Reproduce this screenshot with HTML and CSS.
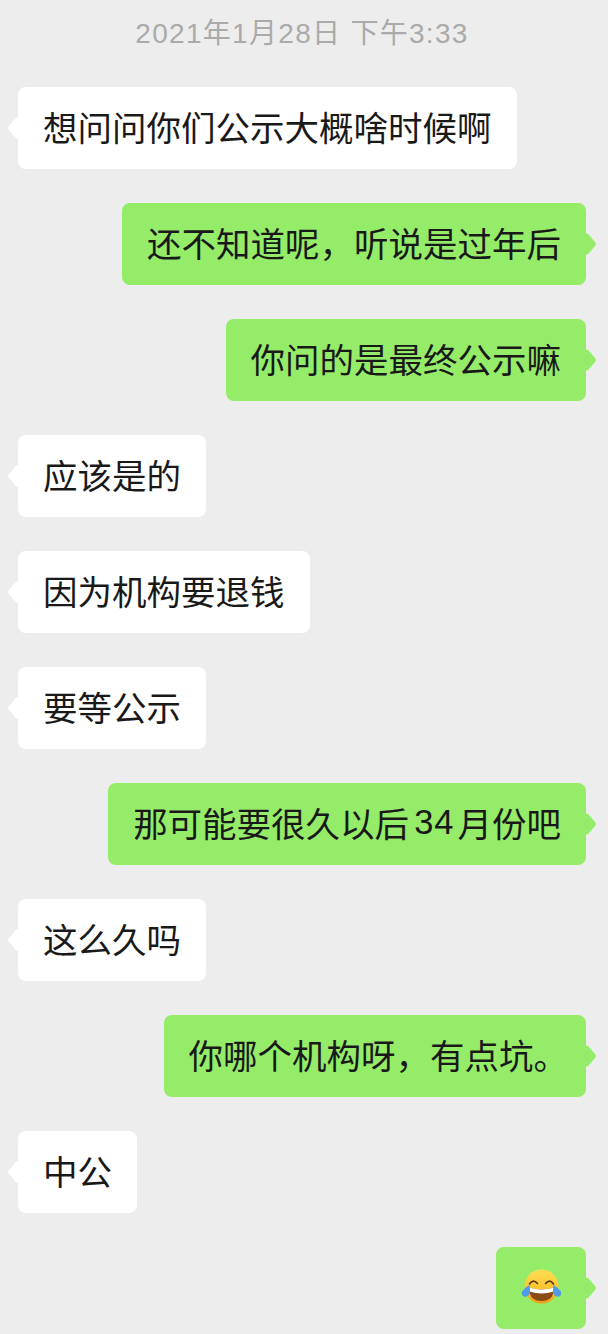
FILE: index.html
```html
<!DOCTYPE html>
<html lang="zh-CN">
<head>
    <meta charset="UTF-8">
    <meta name="viewport" content="width=device-width, initial-scale=1.0">
    <title>聊天记录</title>
    <link rel="stylesheet" href="styles.css">
</head>
<body>
    <main class="chat">
        <p class="time">2021年1月28日 下午3:33</p>

        <div class="msg them"><div class="bubble">想问问你们公示大概啥时候啊</div></div>
        <div class="msg me"><div class="bubble">还不知道呢&#65292;听说是过年后</div></div>
        <div class="msg me"><div class="bubble">你问的是最终公示嘛</div></div>
        <div class="msg them"><div class="bubble">应该是的</div></div>
        <div class="msg them"><div class="bubble">因为机构要退钱</div></div>
        <div class="msg them"><div class="bubble">要等公示</div></div>
        <div class="msg me"><div class="bubble">那可能要很久以后<span class="num">34</span>月份吧</div></div>
        <div class="msg them"><div class="bubble">这么久吗</div></div>
        <div class="msg me"><div class="bubble">你哪个机构呀&#65292;有点坑<span class="stop">。</span></div></div>
        <div class="msg them"><div class="bubble">中公</div></div>
        <div class="msg me">
            <div class="bubble bubble-emoji">
                <!-- laughing face with tears -->
                <svg class="emoji" viewBox="0 0 40 40" width="40" height="40">
                    <defs>
                        <linearGradient id="face" x1="0" y1="0" x2="0" y2="1">
                            <stop offset="0%" stop-color="#ffdf55"/>
                            <stop offset="60%" stop-color="#fdc22e"/>
                            <stop offset="100%" stop-color="#f39a14"/>
                        </linearGradient>
                    </defs>
                    <circle cx="20.5" cy="18.5" r="17" fill="url(#face)"/>
                    <path d="M8.5 16 Q12 10.5 16.5 15.5" fill="none" stroke="#5e3810" stroke-width="1.6" stroke-linecap="round"/>
                    <path d="M24.5 15.5 Q29 10.5 32.5 16" fill="none" stroke="#5e3810" stroke-width="1.6" stroke-linecap="round"/>
                    <path d="M8 19.5 Q20.5 23.5 33 19.5 Q33 33 20.5 33 Q8 33 8 19.5Z" fill="#8a4b15"/>
                    <path d="M8 19.5 Q20.5 23.5 33 19.5 L32.5 23.5 Q20.5 27.5 8.5 23.5Z" fill="#fff"/>
                    <path d="M8.5 17 Q9.5 23 8.5 26 Q6.5 29.5 3 28.5 Q0 27 1 23.5 Q4 19.5 8.5 17Z" fill="#4f9be8"/>
                    <path d="M32.5 17 Q31.5 23 32.5 26 Q34.5 29.5 38 28.5 Q41 27 40 23.5 Q37 19.5 32.5 17Z" fill="#4f9be8"/>
                </svg>
            </div>
        </div>
    </main>
</body>
</html>
```

FILE: styles.css
```css
body {
    margin: 0;
    background-color: #ededed;
    color: #191919;
    font-family: "Liberation Sans", "Noto Sans CJK SC", sans-serif;
}

.chat {
    display: flex;
    flex-direction: column;
    gap: 34px;
    height: 1334px;
    padding: 0 22px 0 18px;
    box-sizing: border-box;
    overflow: hidden;
}

.time {
    margin: 15px 0 0;
    height: 38px;
    line-height: 38px;
    font-size: 28px;
    letter-spacing: 1.3px;
    text-align: center;
    color: #aaaaaa;
}

.msg {
    display: flex;
}

.msg.me {
    justify-content: flex-end;
}

.bubble {
    position: relative;
    display: flex;
    align-items: center;
    height: 82px;
    padding: 0 25px 4px;
    box-sizing: border-box;
    border-radius: 8px;
    background-color: #ffffff;
    font-size: 34.5px;
    white-space: nowrap;
}

.bubble-emoji {
    padding-bottom: 0;
}

/* little tail on the side of the bubble */
.bubble::before {
    content: "";
    position: absolute;
    top: 33px;
    left: -9px;
    width: 16px;
    height: 16px;
    background-color: inherit;
    border-radius: 2px;
    transform: scaleX(0.85) rotate(45deg);
}

.me .bubble {
    background-color: #95ec69;
}

.me .bubble::before {
    left: auto;
    right: -9px;
}

.num {
    margin: 0 3px 0 5px;
    letter-spacing: 1px;
}

/* trailing full stop takes up less room than a full character */
.stop {
    margin-right: -7px;
}

.emoji {
    display: block;
    position: relative;
}
```
